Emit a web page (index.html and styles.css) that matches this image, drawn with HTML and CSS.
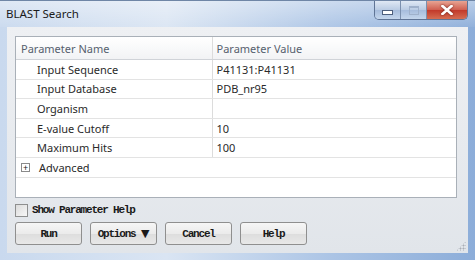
FILE: index.html
```html
<!DOCTYPE html>
<html lang="en">
<head>
  <meta charset="UTF-8">
  <title>BLAST Search</title>
  <link rel="stylesheet" href="styles.css">
</head>
<body>
  <div class="window">
    <div class="titlebar">
      <span class="title">BLAST Search</span>
      <div class="controls">
        <span class="ctl min"><i></i></span>
        <span class="ctl max"><i></i></span>
        <span class="ctl close">
          <svg width="12" height="10" viewBox="0 0 12 10">
            <path d="M1.5 1 L10.5 9 M10.5 1 L1.5 9" stroke="#fff" stroke-width="2.6" stroke-linecap="square"/>
          </svg>
        </span>
      </div>
    </div>

    <div class="client">
      <div class="panel">
        <table class="grid">
          <thead>
            <tr>
              <th class="name">Parameter Name</th>
              <th>Parameter Value</th>
            </tr>
          </thead>
          <tbody>
            <tr><td class="name">Input Sequence</td><td>P41131:P41131</td></tr>
            <tr><td class="name">Input Database</td><td>PDB_nr95</td></tr>
            <tr><td class="name">Organism</td><td></td></tr>
            <tr><td class="name">E-value Cutoff</td><td>10</td></tr>
            <tr><td class="name">Maximum Hits</td><td>100</td></tr>
            <tr class="group">
              <td colspan="2"><span class="expander">+</span>Advanced</td>
            </tr>
          </tbody>
        </table>
      </div>

      <label class="check"><span class="box"></span>Show Parameter Help</label>

      <div class="buttons">
        <button>Run</button>
        <button>Options <span class="arrow">&#9660;</span></button>
        <button>Cancel</button>
        <button>Help</button>
      </div>
      <span class="grip"></span>
    </div>
  </div>
</body>
</html>
```

FILE: styles.css
```css
body {
  margin: 0;
  font-family: "Segoe UI", "Noto Sans", sans-serif;
  font-size: 11px;
}

.window {
  width: 475px;
  height: 260px;
  box-sizing: border-box;
  display: flex;
  flex-direction: column;
  background: linear-gradient(to right, #c9d9ee 0%, #dae5f3 35%, #abc4e5 70%, #8cadd9 100%);
  border-top: 1px solid #6f86a6;
}

.titlebar {
  height: 26px;
  display: flex;
  align-items: flex-start;
  background: linear-gradient(to bottom, rgba(255, 255, 255, 0.4), rgba(255, 255, 255, 0.05));
}

.title {
  margin: 5px 0 0 6px;
  color: #1b1b1b;
  font-size: 11.5px;
}

.controls {
  margin-left: auto;
  margin-right: 7px;
  display: flex;
  border: 1px solid #5f7495;
  border-top: none;
  border-radius: 0 0 5px 5px;
  overflow: hidden;
}

.ctl {
  height: 18px;
  display: flex;
  align-items: center;
  justify-content: center;
}

.min, .max {
  width: 25px;
  background: linear-gradient(to bottom, #dfe8f4, #b9cbe3 50%, #a6bcdc 51%, #c4d6ec);
  border-right: 1px solid #7b90ae;
}

.min i {
  width: 9px;
  height: 3px;
  margin-top: 5px;
  background: #fff;
  border: 1px solid #4d5f7d;
}

.max i {
  width: 8px;
  height: 6px;
  border: 1px solid #9fb1cb;
  border-top-width: 2px;
}

.close {
  width: 40px;
  background: linear-gradient(to bottom, #e8a493, #cf5e4f 50%, #c2392a 51%, #d56d52);
}

.close svg {
  filter: drop-shadow(0 0 1px #6a1d14);
}

.client {
  flex: 1;
  margin: 0 7px 7px 7px;
  padding: 9px 11px 0 8px;
  background: linear-gradient(to bottom, #eef0f3, #e1e5ea);
  position: relative;
}

.panel {
  height: 160px;
  background: #fff;
  border: 1px solid #a9b0b8;
}

.grid {
  width: 100%;
  table-layout: fixed;
  border-collapse: collapse;
  color: #2a2a2a;
}

.grid th {
  height: 22px;
  padding: 0 4px;
  text-align: left;
  font-weight: normal;
  color: #56606e;
  background: linear-gradient(to bottom, #ffffff, #f2f3f5);
  border-bottom: 1px solid #d0d3d8;
}

.grid td {
  height: 18.6px;
  padding: 0 4px;
  border-bottom: 1px solid #e3e3e3;
}

.grid .name {
  width: 196px;
  box-sizing: border-box;
  border-right: 1px solid #dcdcdc;
}

.grid td.name {
  padding-left: 21px;
}

.grid th.name {
  padding-left: 5px;
}

.group td {
  padding-left: 5px;
}

.expander {
  display: inline-block;
  width: 7px;
  height: 7px;
  margin-right: 9px;
  border: 1px solid #8a8a8a;
  font-size: 9px;
  line-height: 7px;
  text-align: center;
  vertical-align: 1px;
  color: #222;
}

.check {
  display: flex;
  align-items: center;
  margin-top: 5px;
  height: 14px;
  font-family: "Liberation Mono", monospace;
  font-weight: bold;
  font-size: 11px;
  letter-spacing: -1.2px;
  color: #1a1a1a;
}

.box {
  width: 11px;
  height: 11px;
  margin: 0 4px 0 0;
  border: 1px solid #8e8f8f;
  background: linear-gradient(135deg, #dcdcdc, #f7f7f7);
}

.buttons {
  display: flex;
  gap: 8px;
  margin-top: 5px;
}

.buttons button {
  width: 67px;
  height: 23px;
  padding: 0;
  font-family: "Liberation Mono", monospace;
  font-weight: bold;
  font-size: 11px;
  letter-spacing: -1.2px;
  color: #1a1a1a;
  border: 1px solid #8f8f8f;
  border-radius: 3px;
  background: linear-gradient(to bottom, #f6f6f6, #ebebeb 50%, #dddddd 51%, #e8e8e8);
}

.arrow {
  font-family: "DejaVu Sans", sans-serif;
  font-size: 11px;
  letter-spacing: 0;
}

.grip {
  position: absolute;
  right: 2px;
  bottom: 2px;
  width: 10px;
  height: 10px;
  background: radial-gradient(circle, #a9aeb5 0.8px, transparent 1.2px) 0 0 / 3px 3px;
  clip-path: polygon(100% 0, 100% 100%, 0 100%);
}
```
